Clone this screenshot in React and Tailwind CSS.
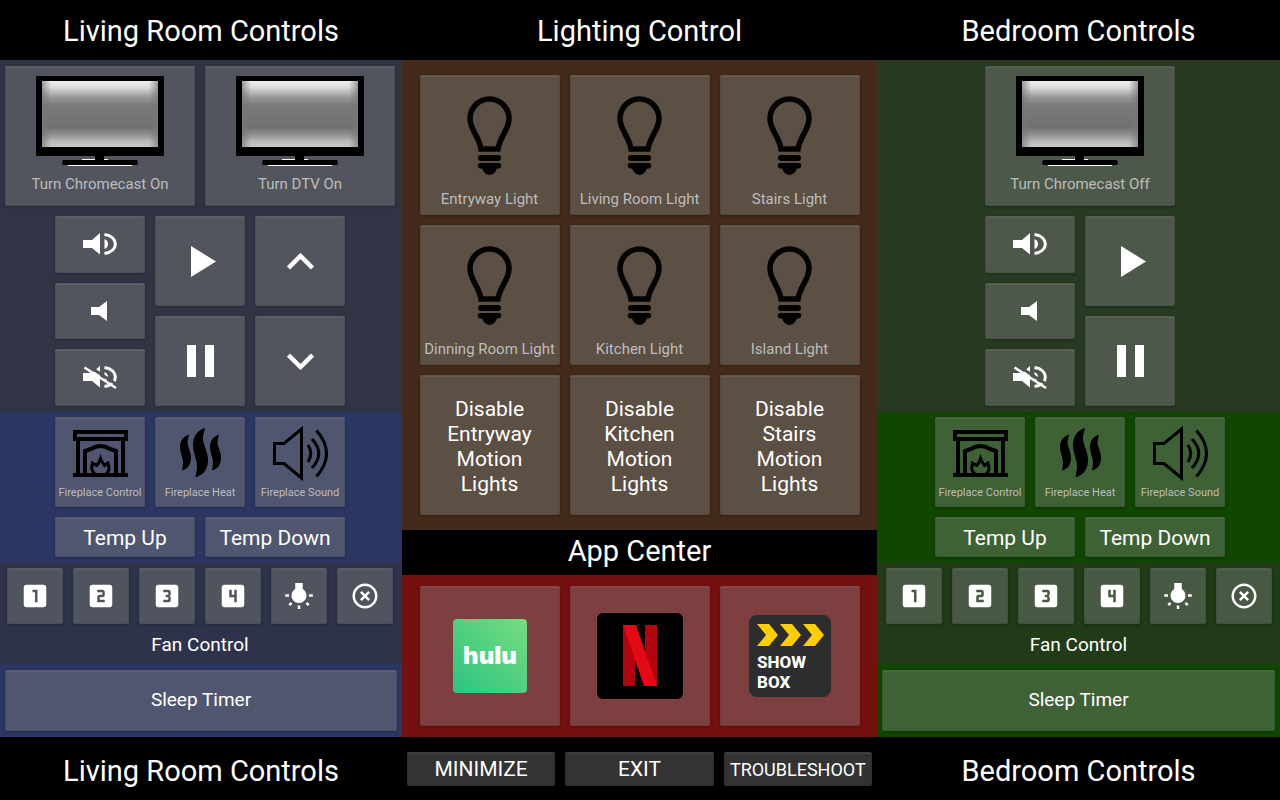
import React from "react";
import {
  MdLooksOne,
  MdLooksTwo,
  MdLooks3,
  MdLooks4,
  MdWbIncandescent,
  MdHighlightOff,
} from "react-icons/md";

const themes = {
  living: {
    media: "bg-[#313444]",
    mediaButton: "bg-[#52555e]",
    fireplace: "bg-[#2c3662]",
    fireplaceButton: "bg-[#50566f]",
    fan: "bg-[#2e334b] pr-0.5",
    fanButton: "bg-[#50545f]",
    nudge: "pr-0.5",
  },
  bedroom: {
    media: "bg-[#283a22]",
    mediaButton: "bg-[#4d584a]",
    fireplace: "bg-[#114600]",
    fireplaceButton: "bg-[#3f6136]",
    fan: "bg-[#213a18]",
    fanButton: "bg-[#475943]",
    nudge: "pl-[3px]",
  },
};

const TvIcon = () => (
  <svg width="128" height="90" viewBox="0 0 128 90" aria-hidden="true">
    <defs>
      <linearGradient id="tvGlow" x1="0" y1="0" x2="0" y2="1">
        <stop offset="0" stopColor="#f0f0f0" />
        <stop offset="0.1" stopColor="#dadada" />
        <stop offset="0.25" stopColor="#969696" />
        <stop offset="0.36" stopColor="#7c7c7c" />
        <stop offset="0.7" stopColor="#707070" />
        <stop offset="0.82" stopColor="#939393" />
        <stop offset="0.92" stopColor="#bababa" />
        <stop offset="1" stopColor="#c8c8c8" />
      </linearGradient>
      <linearGradient id="tvSides">
        <stop offset="0" stopColor="#777" stopOpacity="0.7" />
        <stop offset="0.08" stopColor="#777" stopOpacity="0" />
        <stop offset="0.92" stopColor="#777" stopOpacity="0" />
        <stop offset="1" stopColor="#777" stopOpacity="0.7" />
      </linearGradient>
    </defs>
    <rect width="128" height="80" fill="#000" />
    <rect x="6" y="5" width="116" height="66" fill="url(#tvGlow)" />
    <rect x="6" y="5" width="116" height="66" fill="url(#tvSides)" />
    <path d="M46 83h26v1H46zM32 89h64v1H32z" fill="#fff" />
    <path d="M59 80h9v4h33l1 3-1 2H27l-1-2 1-3h32z" fill="#000" />
  </svg>
);

const VolumeShape = () => (
  <>
    <path d="M0 7h9l8-7v21.500l-8-6.500H0z" fill="currentColor" />
    <path d="M21.500 6q3.500 1.500 3.500 5t-3.500 5z" fill="currentColor" />
    <path d="M21.500 1.500c14.500 2 14.500 17 0 19" fill="none" stroke="currentColor" strokeWidth="3" />
  </>
);

const VolumeUpIcon = () => (
  <svg width="34" height="22" viewBox="0 0 34 22" aria-hidden="true">
    <VolumeShape />
  </svg>
);

const VolumeDownIcon = () => (
  <svg width="18" height="20" viewBox="0 0 18 20" aria-hidden="true">
    <path d="M0 6h8l8-6v20l-8-6H0z" fill="currentColor" />
  </svg>
);

const MuteIcon = () => (
  <svg width="35" height="23" viewBox="0 0 35 23" aria-hidden="true">
    <mask id="muteCut">
      <rect width="35" height="23" fill="#fff" />
      <path d="M3-1.500L37 20.500" stroke="#000" strokeWidth="3" />
      <path d="M-1 -2L9 5.500L0 7z" fill="#000" />
    </mask>
    <g mask="url(#muteCut)">
      <VolumeShape />
    </g>
    <path d="M1.500 1.500l31.500 20.500" stroke="currentColor" strokeWidth="2.500" />
  </svg>
);

const PlayIcon = () => (
  <svg width="32" height="31" viewBox="0 0 32 31" aria-hidden="true">
    <path d="M7 0l25 15.500L7 31z" fill="currentColor" />
  </svg>
);

const PauseIcon = () => (
  <svg width="27" height="32" viewBox="0 0 27 32" aria-hidden="true">
    <path d="M0 0h9v32H0zM18 0h9v32h-9z" fill="currentColor" />
  </svg>
);

const ChevronUp = () => (
  <svg width="27" height="17" viewBox="0 0 27 17" fill="none" stroke="currentColor" strokeWidth="4.500" aria-hidden="true">
    <path d="M1.500 15L13.500 3l12 12" />
  </svg>
);

const ChevronDown = () => (
  <svg width="27" height="17" viewBox="0 0 27 17" fill="none" stroke="currentColor" strokeWidth="4.500" aria-hidden="true">
    <path d="M1.500 2l12 12 12-12" />
  </svg>
);

const FireplaceIcon = () => (
  <svg width="55" height="47" viewBox="0 0 55 47" fill="none" stroke="#000" aria-hidden="true">
    <rect x="2" y="2" width="51" height="7" strokeWidth="4" />
    <path d="M5 10v34M50 10v34" strokeWidth="4" />
    <path d="M0 45h55" strokeWidth="4" />
    <path d="M12 44V21l6-2q4.500-3 9.500-3t9.500 3l6 2v23" strokeWidth="4" />
    <path d="M22 44c-4-3-3.500-8-2.500-11l4 2.500c2-1.500 3-4 4-7 1 3 2.500 5 4 7l3.500-2.500c1.500 4 2 8-2 11" strokeWidth="3" />
  </svg>
);

const HeatIcon = () => (
  <svg width="41" height="50" viewBox="0 0 41 50" aria-hidden="true">
    <path d="M25 0C17 2 13 9 13 17 13 26 17.500 32 17 40L15.500 49.500C24 47 28.500 40 28 31 27.500 22 22 15 23 8z" />
    <path d="M9 6.700C3 8 0 13 0 19 0 25 3.500 30 3 36L2 42.500C8 41 11 36 11 30 11 23 7 18 7.500 13z" />
    <path d="M39 6.700C33 8 30 13 30 19 30 25 33.500 30 33 36L32 42.500C38 41 41 36 41 30 41 23 37 18 37.500 13z" />
  </svg>
);

const SoundIcon = () => (
  <svg width="55" height="55" viewBox="0 0 55 55" fill="none" stroke="#000" strokeWidth="3" aria-hidden="true">
    <path d="M1.500 17.500H11L28.500 3v49L11 37.500H1.500z" />
    <path d="M35 19q5.500 8.500 0 17M39 13q13.500 14.500 0 29M43.500 4.500q20 23 0 46" />
  </svg>
);

const BulbIcon = () => (
  <svg width="45" height="79" viewBox="0 0 45 79" fill="#040302" aria-hidden="true">
    <path
      d="M14 53C12 40 3 34 3 22.500A19.500 19.500 0 0 1 42 22.500C42 34 33 40 31 53z"
      fill="none"
      stroke="#040302"
      strokeWidth="5.500"
    />
    <rect x="11" y="59" width="23" height="6" rx="3" />
    <path d="M13 67h19c3 0 3 5 0 5.500h-2c-2 4.500-4.500 6.500-7.500 6.500s-5.500-2-7.500-6.500h-2c-3-.5-3-5.500 0-5.500z" />
  </svg>
);

const HuluLogo = () => (
  <svg width="74" height="74" viewBox="0 0 74 74" role="img" aria-label="Hulu">
    <defs>
      <linearGradient id="huluGreen" x1="0" y1="1" x2="1" y2="0">
        <stop offset="0" stopColor="#2bc481" />
        <stop offset="1" stopColor="#76dc80" />
      </linearGradient>
    </defs>
    <rect width="74" height="74" rx="4" fill="url(#huluGreen)" />
    <text x="37" y="45" textAnchor="middle" fill="#fff" fontFamily="Inter, sans-serif" fontSize="24" fontWeight="900">
      hulu
    </text>
  </svg>
);

const NetflixLogo = () => (
  <svg width="86" height="86" viewBox="0 0 86 86" role="img" aria-label="Netflix">
    <rect width="86" height="86" rx="6" fill="#000" />
    <rect x="26" y="12" width="12" height="61" fill="#b1060f" />
    <rect x="48" y="12" width="12" height="61" fill="#b1060f" />
    <rect width="13" height="61" fill="#e50914" transform="translate(26 12) skewX(19)" />
  </svg>
);

const ShowBoxLogo = () => (
  <svg width="82" height="82" viewBox="0 0 82 82" role="img" aria-label="Show Box">
    <rect width="82" height="82" rx="8" fill="#2c2d2f" />
    <g fill="#ffce00">
      <path d="M8 9h12l9 11-9 11H8l9-11z" />
      <path d="M31 9h12l9 11-9 11H31l9-11z" />
      <path d="M54 9h12l9 11-9 11H54l9-11z" />
    </g>
    <g fill="#fff" fontFamily="Roboto, sans-serif" fontSize="17" fontWeight="800">
      <text x="8" y="53">SHOW</text>
      <text x="8" y="73">BOX</text>
    </g>
  </svg>
);

const TileButton = ({ className = "", children, ...rest }) => (
  <button
    type="button"
    className={`flex items-center justify-center rounded-xs text-white shadow-[inset_0_0_0_1px_rgba(0,0,0,0.07),inset_0_2px_0_rgba(255,255,255,0.07),0_1px_3px_rgba(0,0,0,0.25)] ${className}`}
    {...rest}
  >
    {children}
  </button>
);

const TvButton = ({ label, className }) => (
  <TileButton className={`h-[140px] w-[190px] flex-col pb-0.5 ${className}`}>
    <TvIcon />
    <span className="mt-2 text-[15px] leading-5 text-[#bdbdbd]">{label}</span>
  </TileButton>
);

const MediaControls = ({ theme, withChannels }) => (
  <div className="flex h-[190px] gap-2.5">
    <div className="flex w-[90px] flex-col gap-2.5">
      <TileButton aria-label="Volume up" className={`flex-1 ${theme.mediaButton}`}>
        <VolumeUpIcon />
      </TileButton>
      <TileButton aria-label="Volume down" className={`flex-1 ${theme.mediaButton}`}>
        <VolumeDownIcon />
      </TileButton>
      <TileButton aria-label="Mute" className={`flex-1 ${theme.mediaButton}`}>
        <MuteIcon />
      </TileButton>
    </div>
    <div className="flex w-[90px] flex-col gap-2.5">
      <TileButton aria-label="Play" className={`flex-1 ${theme.mediaButton}`}>
        <PlayIcon />
      </TileButton>
      <TileButton aria-label="Pause" className={`flex-1 ${theme.mediaButton}`}>
        <PauseIcon />
      </TileButton>
    </div>
    {withChannels && (
      <div className="flex w-[90px] flex-col gap-2.5">
        <TileButton aria-label="Channel up" className={`flex-1 ${theme.mediaButton}`}>
          <ChevronUp />
        </TileButton>
        <TileButton aria-label="Channel down" className={`flex-1 ${theme.mediaButton}`}>
          <ChevronDown />
        </TileButton>
      </div>
    )}
  </div>
);

const fireplaceItems = [
  { label: "Fireplace Control", Icon: FireplaceIcon },
  { label: "Fireplace Heat", Icon: HeatIcon },
  { label: "Fireplace Sound", Icon: SoundIcon },
];

const FireplaceControls = ({ theme }) => (
  <section className={`flex flex-col items-center gap-2.5 pt-[5px] pb-1.5 ${theme.fireplace} ${theme.nudge}`}>
    <div className="flex gap-2.5">
      {fireplaceItems.map(({ label, Icon }) => (
        <TileButton key={label} className={`h-[90px] w-[90px] flex-col pt-0.5 ${theme.fireplaceButton}`}>
          <span className="flex h-14 items-center">
            <Icon />
          </span>
          <span className="mt-1 text-[11px] leading-4 whitespace-nowrap text-[#bdbdbd]">{label}</span>
        </TileButton>
      ))}
    </div>
    <div className="flex gap-2.5">
      <TileButton className={`h-10 w-[140px] pt-1 text-[21px] ${theme.fireplaceButton}`}>Temp Up</TileButton>
      <TileButton className={`h-10 w-[140px] pt-1 text-[21px] ${theme.fireplaceButton}`}>Temp Down</TileButton>
    </div>
  </section>
);

const fanItems = [
  { label: "Fan speed 1", Icon: MdLooksOne },
  { label: "Fan speed 2", Icon: MdLooksTwo },
  { label: "Fan speed 3", Icon: MdLooks3 },
  { label: "Fan speed 4", Icon: MdLooks4 },
  { label: "Fan light", Icon: MdWbIncandescent },
  { label: "Fan off", Icon: MdHighlightOff },
];

const FanControls = ({ theme }) => (
  <section className={`flex flex-col items-center pt-[5px] pb-1 ${theme.fan}`}>
    <div className="flex gap-2.5">
      {fanItems.map(({ label, Icon }) => (
        <TileButton key={label} aria-label={label} className={`h-14 w-14 ${theme.fanButton}`}>
          <Icon size={30} />
        </TileButton>
      ))}
    </div>
    <h3 className="mt-1.5 text-[19px] leading-[30px]">Fan Control</h3>
  </section>
);

const RoomColumn = ({ title, tvButtons, theme, withChannels }) => (
  <div className="flex flex-col">
    <h2 className="flex h-[60px] items-center justify-center pt-1 text-[29px]">{title}</h2>
    <section className={`flex flex-col items-center gap-2.5 py-1.5 ${theme.media} ${theme.nudge}`}>
      <div className="flex gap-2.5">
        {tvButtons.map((label) => (
          <TvButton key={label} label={label} className={theme.mediaButton} />
        ))}
      </div>
      <MediaControls theme={theme} withChannels={withChannels} />
    </section>
    <FireplaceControls theme={theme} />
    <FanControls theme={theme} />
    <section className={`px-[5px] py-1.5 ${theme.fireplace}`}>
      <TileButton className={`h-[61px] w-full text-[19px] ${theme.fireplaceButton}`}>Sleep Timer</TileButton>
    </section>
    <footer className="flex flex-1 items-center justify-center pt-3 pb-2 text-[29px] leading-10">{title}</footer>
  </div>
);

const lights = [
  "Entryway Light",
  "Living Room Light",
  "Stairs Light",
  "Dinning Room Light",
  "Kitchen Light",
  "Island Light",
];

const motionZones = ["Entryway", "Kitchen", "Stairs"];

const apps = [
  { name: "Hulu", Logo: HuluLogo },
  { name: "Netflix", Logo: NetflixLogo },
  { name: "Show Box", Logo: ShowBoxLogo },
];

const CenterColumn = () => (
  <div className="flex flex-col">
    <h2 className="flex h-[60px] items-center justify-center pt-1 text-[29px]">Lighting Control</h2>
    <section className="flex justify-center bg-[#432a1a] py-[15px]">
      <div className="grid grid-cols-3 gap-2.5">
        {lights.map((label) => (
          <TileButton key={label} className="h-[140px] w-[140px] flex-col bg-[#5c4f43] pt-[15px]">
            <BulbIcon />
            <span className="mt-3.5 text-[15px] leading-5 whitespace-nowrap text-[#bdbdbd]">{label}</span>
          </TileButton>
        ))}
        {motionZones.map((zone) => (
          <TileButton key={zone} className="h-[140px] w-[140px] bg-[#5c4f43] px-5 pt-1 text-[21px] leading-[25px]">
            Disable {zone} Motion Lights
          </TileButton>
        ))}
      </div>
    </section>
    <h2 className="flex h-[45px] items-center justify-center pb-0.5 text-[29px]">App Center</h2>
    <section className="flex justify-center gap-2.5 bg-[#751010] py-[11px]">
      {apps.map(({ name, Logo }) => (
        <TileButton key={name} className="h-[140px] w-[140px] bg-[#7d3f3f]">
          <Logo />
        </TileButton>
      ))}
    </section>
    <footer className="flex flex-1 items-center gap-2.5 px-[5px]">
      <TileButton className="h-[34px] flex-1 basis-0 bg-[#333] pt-0.5 text-[21px]">MINIMIZE</TileButton>
      <TileButton className="h-[34px] flex-1 basis-0 bg-[#333] pt-0.5 text-[21px]">EXIT</TileButton>
      <TileButton className="h-[34px] flex-1 basis-0 bg-[#333] pt-0.5 text-lg">TROUBLESHOOT</TileButton>
    </footer>
  </div>
);

export default function App() {
  return (
    <main className="grid min-h-screen grid-cols-[402fr_475fr_403fr] bg-black font-[Roboto,sans-serif] text-white">
      <RoomColumn
        title="Living Room Controls"
        tvButtons={["Turn Chromecast On", "Turn DTV On"]}
        theme={themes.living}
        withChannels
      />
      <CenterColumn />
      <RoomColumn title="Bedroom Controls" tvButtons={["Turn Chromecast Off"]} theme={themes.bedroom} />
    </main>
  );
}
